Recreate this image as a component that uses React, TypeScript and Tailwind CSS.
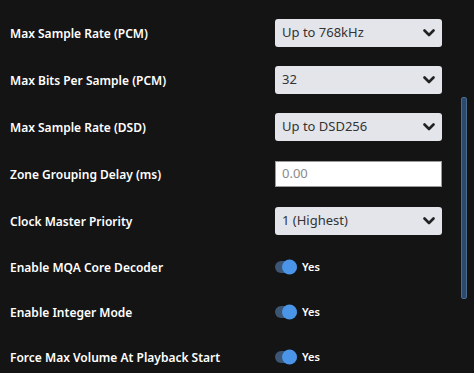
import React from 'react';

type Row =
    | { label: string; kind: 'select'; value: string }
    | { label: string; kind: 'input'; placeholder: string }
    | { label: string; kind: 'toggle' };

const rows: Row[] = [
    { label: 'Max Sample Rate (PCM)', kind: 'select', value: 'Up to 768kHz' },
    { label: 'Max Bits Per Sample (PCM)', kind: 'select', value: '32' },
    { label: 'Max Sample Rate (DSD)', kind: 'select', value: 'Up to DSD256' },
    { label: 'Zone Grouping Delay (ms)', kind: 'input', placeholder: '0.00' },
    { label: 'Clock Master Priority', kind: 'select', value: '1 (Highest)' },
    { label: 'Enable MQA Core Decoder', kind: 'toggle' },
    { label: 'Enable Integer Mode', kind: 'toggle' },
    { label: 'Force Max Volume At Playback Start', kind: 'toggle' },
];

function Chevron() {
    return (
        <svg width="12" height="8" viewBox="0 0 12 8" fill="none">
            <path d="M1.5 1.5 6 6l4.5-4.5" stroke="#222" strokeWidth={2.6} strokeLinecap="round" strokeLinejoin="round" />
        </svg>
    );
}

function Control({ row }: { row: Row }) {
    if (row.kind === 'select') {
        return (
            <div className="flex h-[28px] w-[167px] items-center justify-between rounded-[3px] bg-[#e3e5eb] pl-[7px] pr-[7px] text-[13px] text-[#333]">
                <span>{row.value}</span>
                <Chevron />
            </div>
        );
    }
    if (row.kind === 'input') {
        return (
            <div className="flex h-[26px] w-[167px] items-center border border-[#9a9a9a] bg-white px-[6px] text-[13px] text-[#8a8a8a]">
                {row.placeholder}
            </div>
        );
    }
    return (
        <div className="flex items-center gap-[5px] pt-[1px]">
            <div className="relative h-[12px] w-[22px] rounded-full bg-[#3b5573]">
                <div className="absolute right-0 top-1/2 h-[15px] w-[15px] -translate-y-1/2 rounded-full bg-[#4b95e8]" />
            </div>
            <span className="text-[11px] font-semibold text-white">Yes</span>
        </div>
    );
}

export default function App() {
    return (
        <div
            className="relative h-[373px] w-[474px] overflow-hidden bg-[#141414] pt-[9px]"
            style={{ fontFamily: '"Noto Sans", "Open Sans", sans-serif' }}
        >
            {rows.map((row, i) => (
                <div
                    key={row.label}
                    className={`grid grid-cols-[265px_167px] items-center pl-[10px] ${i < 5 ? 'h-[47px]' : 'h-[45px]'}`}
                >
                    <span className="pt-[2px] text-[12px] font-semibold text-white">{row.label}</span>
                    <Control row={row} />
                </div>
            ))}
            <div className="absolute left-[461px] top-[97px] h-[202px] w-[6px] rounded-[2px] border border-[#4a6a8e] bg-[#2c4a6b]" />
        </div>
    );
}
